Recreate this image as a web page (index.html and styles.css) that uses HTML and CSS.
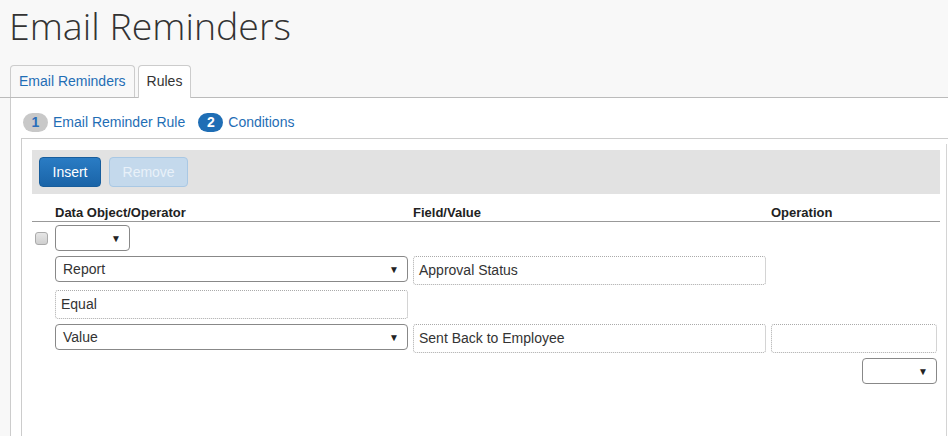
FILE: index.html
```html
<html>
<head>
  <meta charset="UTF-8">
  <link rel="stylesheet" href="styles.css">
</head>
<body>
  <h1 class="title">Email Reminders</h1>

  <ul class="tabs">
    <li class="tab">Email Reminders</li>
    <li class="tab active">Rules</li>
  </ul>

  <div class="panel">
    <div class="steps">
      <span class="step"><span class="badge">1</span>Email Reminder Rule</span>
      <span class="step"><span class="badge current">2</span>Conditions</span>
    </div>

    <div class="box">
      <div class="scroller">
        <div class="toolbar">
          <button class="btn primary">Insert</button>
          <button class="btn disabled">Remove</button>
        </div>

        <div class="grid">
          <div class="head"></div>
          <div class="head">Data Object/Operator</div>
          <div class="head">Field/Value</div>
          <div class="head last">Operation</div>

          <!-- row 1 -->
          <div class="cell check"><span class="checkbox"></span></div>
          <div class="cell"><div class="select small"><span></span><span class="arrow">&#9660;</span></div></div>
          <div class="cell"></div>
          <div class="cell"></div>

          <!-- row 2 -->
          <div class="cell"></div>
          <div class="cell"><div class="select"><span>Report</span><span class="arrow">&#9660;</span></div></div>
          <div class="cell"><div class="input">Approval Status</div></div>
          <div class="cell"></div>

          <!-- row 3 -->
          <div class="cell"></div>
          <div class="cell"><div class="input">Equal</div></div>
          <div class="cell"></div>
          <div class="cell"></div>

          <!-- row 4 -->
          <div class="cell"></div>
          <div class="cell"><div class="select"><span>Value</span><span class="arrow">&#9660;</span></div></div>
          <div class="cell"><div class="input">Sent Back to Employee</div></div>
          <div class="cell"><div class="input"></div></div>

          <!-- row 5 -->
          <div class="cell"></div>
          <div class="cell"></div>
          <div class="cell"></div>
          <div class="cell right"><div class="select small"><span></span><span class="arrow">&#9660;</span></div></div>
        </div>
      </div>
    </div>
  </div>
</body>
</html>
```

FILE: styles.css
```css
* {
  box-sizing: border-box;
}

body {
  margin: 0;
  background: #f8f8f8;
  font-family: "Liberation Sans", Arial, sans-serif;
  font-size: 14px;
  color: #333;
  overflow: hidden;
}

.title {
  margin: 0;
  padding: 0 0 0 9px;
  height: 65px;
  font-family: "Open Sans", sans-serif;
  font-weight: 300;
  font-size: 37.5px;
  line-height: normal;
  color: #333;
}

.tabs {
  display: flex;
  gap: 3px;
  margin: 0;
  padding: 0 0 0 10px;
  list-style: none;
  border-bottom: 1px solid #bbb;
  height: 33px;
}

.tab {
  height: 32px;
  line-height: 31px;
  padding: 0 8px;
  border: 1px solid #ccc;
  border-bottom: none;
  border-radius: 4px 4px 0 0;
  color: #1f6eb5;
}

.tab.active {
  height: 33px;
  background: #fff;
  color: #333;
}

.panel {
  margin-left: 10px;
  background: #fff;
  border-left: 1px solid #ccc;
  padding-top: 15px;
  height: 340px;
}

.steps {
  display: flex;
  gap: 13px;
  padding-left: 12px;
  height: 19px;
  line-height: 19px;
}

.step {
  display: flex;
  gap: 5px;
  color: #1f6eb5;
}

.badge {
  display: inline-block;
  width: 25px;
  height: 19px;
  border-radius: 10px;
  background: #c8c8c8;
  color: #2a6ebb;
  font-weight: bold;
  text-align: center;
}

.badge.current {
  background: #1f6eb5;
  color: #fff;
}

.box {
  margin: 6px 0 0 10px;
  border-top: 1px solid #ccc;
  border-left: 1px solid #ccc;
  padding: 5px 0 0 10px;
  height: 300px;
}

.scroller {
  width: 915px;
  border-right: 1px solid #d4d4d4;
  padding: 6px 6px 0 0;
  height: 295px;
}

.toolbar {
  display: flex;
  gap: 8px;
  background: #e2e2e2;
  height: 44px;
  padding: 7px;
}

.btn {
  height: 30px;
  padding: 0 12.5px;
  border-radius: 4px;
  font-family: "Liberation Sans", Arial, sans-serif;
  font-size: 14px;
}

.primary {
  background: linear-gradient(#2a7cc4, #1a64a8);
  border: 1px solid #175d9c;
  color: #fff;
}

.disabled {
  background: #c4d9ec;
  border: 1px solid #a9c8e4;
  color: #e9f1f9;
}

.grid {
  display: grid;
  grid-template-columns: 18px 353px 353px 166px;
  column-gap: 5px;
  row-gap: 5px;
}

.head {
  height: 28px;
  padding-top: 11px;
  font-size: 13px;
  font-weight: bold;
  color: #222;
  border-bottom: 1px solid #999;
  margin-right: -5px;
  margin-bottom: -2px;
}

.head.last {
  margin-right: -3px;
}

.cell {
  display: flex;
  min-width: 0;
}

.check {
  align-items: center;
  padding-left: 3px;
}

.right {
  justify-content: flex-end;
}

.checkbox {
  width: 13px;
  height: 13px;
  border: 1px solid #aaa;
  border-radius: 3px;
  background: linear-gradient(#e6e6e6, #cfcfcf);
}

.select {
  display: flex;
  justify-content: space-between;
  align-items: center;
  width: 100%;
  height: 26px;
  padding: 0 8px 0 7px;
  border: 1px solid #888;
  border-radius: 4px;
  background: #fff;
}

.select.small {
  width: 75px;
}

.arrow {
  font-size: 10px;
  color: #222;
}

.input {
  width: 100%;
  height: 29px;
  line-height: 27px;
  padding: 0 5px;
  border: 1px dotted #aaa;
  border-radius: 3px;
  background: #fff;
}
```
